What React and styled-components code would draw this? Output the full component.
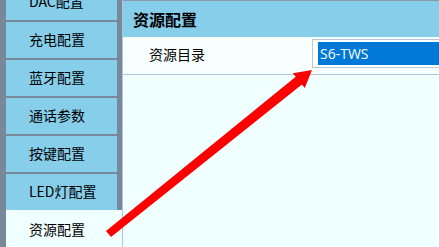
import React from "react";
import styled, { createGlobalStyle } from "styled-components";

const Global = createGlobalStyle`
  html, body { margin: 0; padding: 0; background: #F0FFFF; }
  body { font-family: "Noto Sans CJK SC", "Noto Sans", sans-serif; }
`;

const Screen = styled.div`
  position: relative;
  width: 439px;
  height: 247px;
  overflow: hidden;
  display: flex;
  background: #F0FFFF;
`;

const Sidebar = styled.div`
  width: 122px;
  flex: none;
  background: #778899;
  padding-left: 6px;
  box-sizing: border-box;
  overflow: hidden;
`;

const NavList = styled.div`
  display: flex;
  flex-direction: column;
  gap: 2px;
  margin-top: -16px;
`;

const NavItem = styled.div`
  box-sizing: border-box;
  width: ${(p) => (p.$active ? "116px" : "111px")};
  height: ${(p) => (p.$active ? "40px" : "36px")};
  margin-top: ${(p) => (p.$active ? "-2px" : "0")};
  padding-left: 23px;
  padding-bottom: 2px;
  display: flex;
  align-items: center;
  background: ${(p) => (p.$active ? "#F0FFFF" : "#87CEEB")};
  color: #000;
  font-size: 14px;
  white-space: nowrap;
`;

const Panel = styled.div`
  flex: 1;
  display: flex;
  flex-direction: column;
  border-left: 1px solid #B0C4DE;
  min-width: 0;
`;

const Header = styled.div`
  height: 37px;
  box-sizing: border-box;
  border-top: 1px solid #8a9aa8;
  background: #87CEEB;
  padding-left: 10px;
  padding-bottom: 1px;
  display: flex;
  align-items: center;
  font-size: 16px;
  font-weight: bold;
  color: #000;
`;

const Row = styled.div`
  height: 38px;
  box-sizing: border-box;
  border-bottom: 1px solid #B0C4DE;
  display: flex;
  align-items: center;
  background: #F8FFFF;
`;

const Label = styled.div`
  width: 189px;
  flex: none;
  box-sizing: border-box;
  padding-left: 26px;
  font-size: 14px;
  color: #000;
  margin-top: -3px;
`;

const Field = styled.div`
  flex: none;
  width: 200px;
  height: 29px;
  margin-top: -4px;
  box-sizing: border-box;
  border: 1px solid #B8C8DC;
  background: #fff;
  padding: 2px 0 2px 5px;
  display: flex;
`;

const Selection = styled.div`
  flex: 1;
  background: #0078D7;
  color: #fff;
  font-family: "Open Sans", "Noto Sans", sans-serif;
  font-size: 14px;
  padding-left: 2px;
  display: flex;
  align-items: center;
`;

const Overlay = styled.svg`
  position: absolute;
  left: 0;
  top: 0;
  pointer-events: none;
`;

const items = ["DAC配置", "充电配置", "蓝牙配置", "通话参数", "按键配置", "LED灯配置", "资源配置"];

export default function App() {
  return (
    <>
      <Global />
      <Screen>
        <Sidebar>
          <NavList>
            {items.map((t, i) => (
              <NavItem key={t} $active={i === items.length - 1}>
                {t}
              </NavItem>
            ))}
          </NavList>
        </Sidebar>
        <Panel>
          <Header>资源配置</Header>
          <Row>
            <Label>资源目录</Label>
            <Field>
              <Selection>S6-TWS</Selection>
            </Field>
          </Row>
        </Panel>
        <Overlay width="439" height="247" viewBox="0 0 439 247">
          <polygon
            fill="#FF0000"
            points="106,230.9 295.7,76.8 292.8,73.3 312,70 304.8,88.1 301.9,84.6 111,237.1"
          />
        </Overlay>
      </Screen>
    </>
  );
}
